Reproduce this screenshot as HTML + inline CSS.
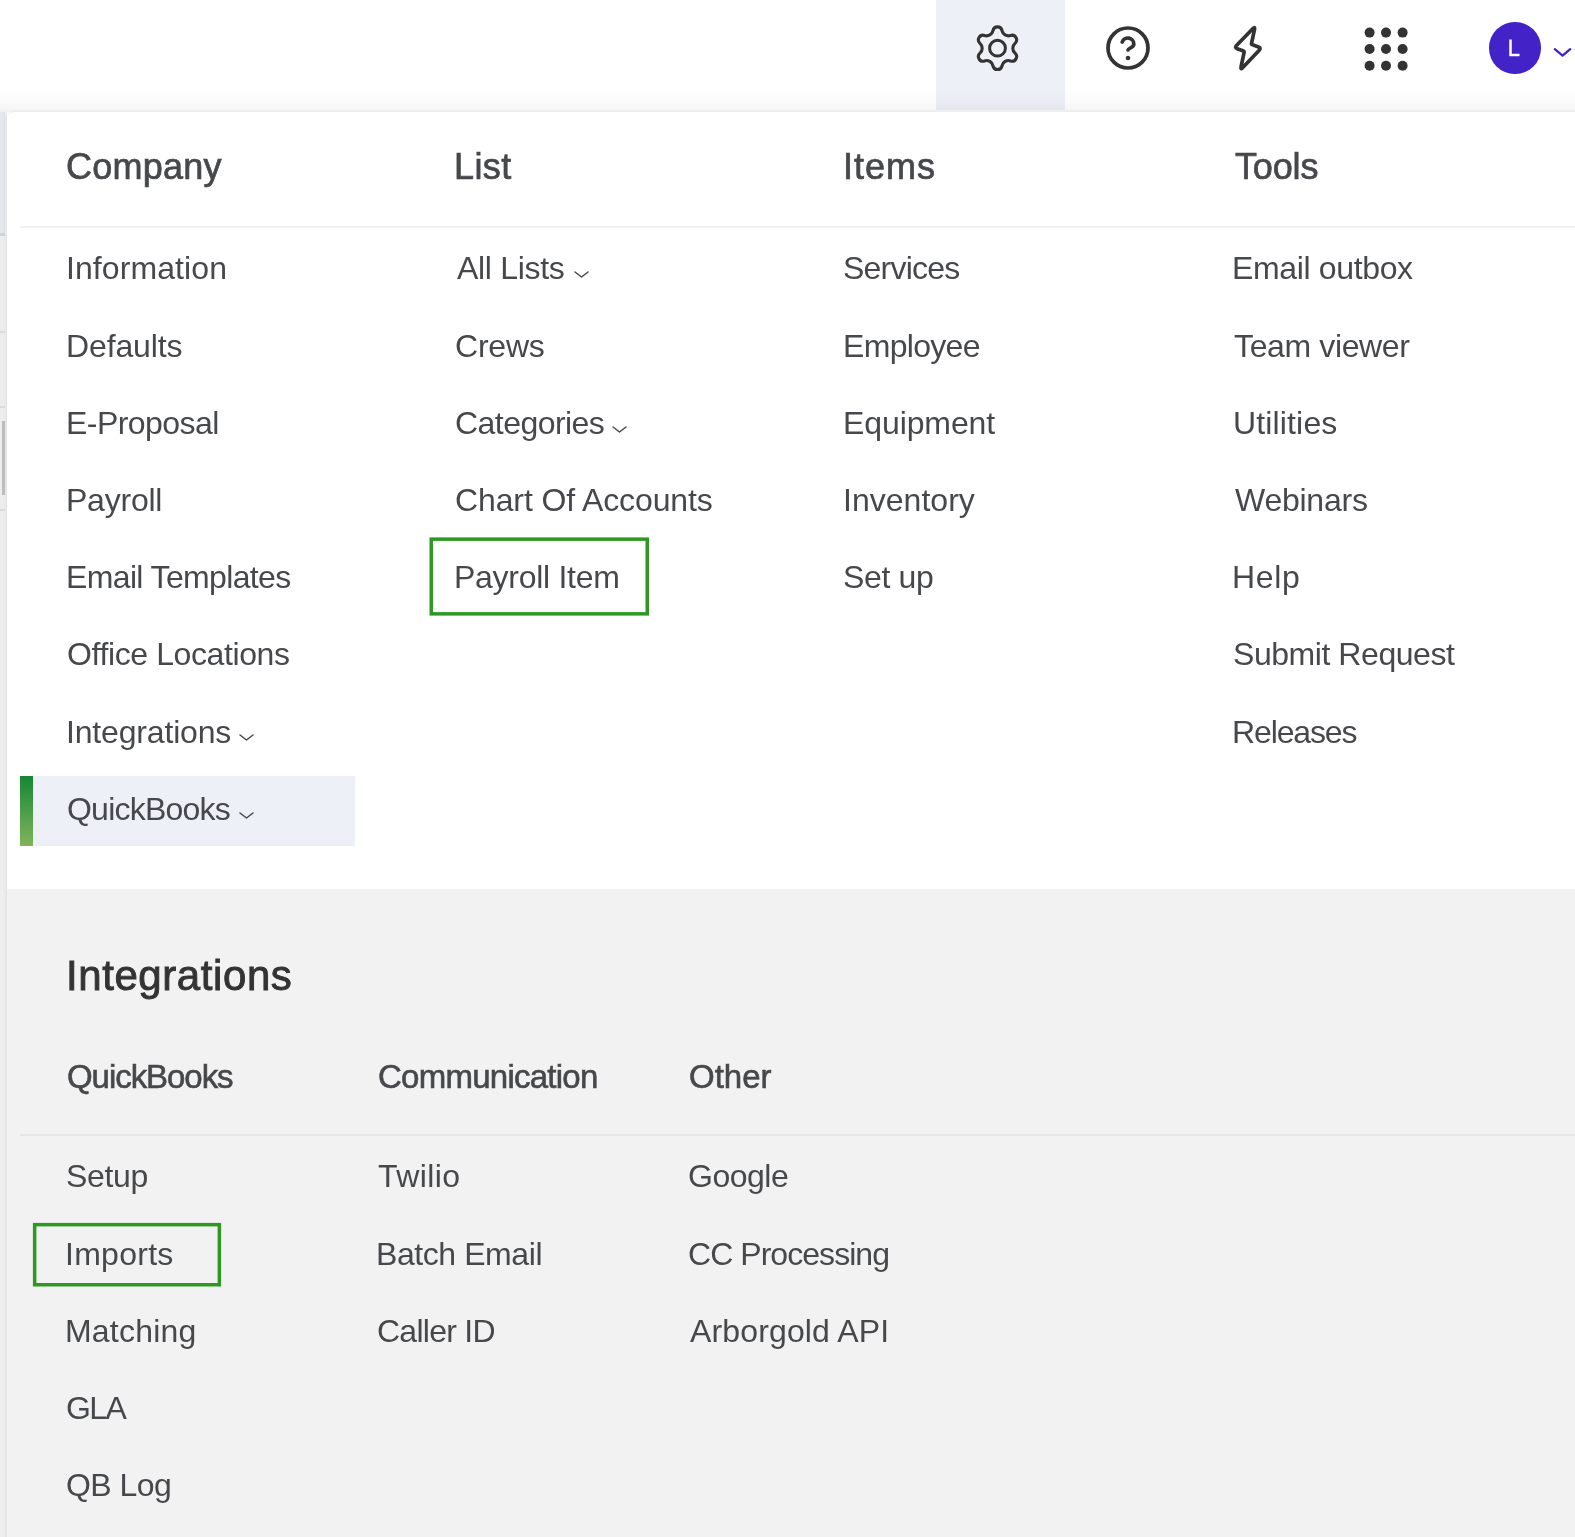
<!DOCTYPE html>
<html><head><meta charset="utf-8"><style>
html,body{margin:0;padding:0;}
body{width:1575px;height:1537px;overflow:hidden;position:relative;background:#ffffff;font-family:"Liberation Sans",sans-serif;}
.ab{position:absolute;}
.t{position:absolute;white-space:nowrap;will-change:transform;}
</style></head><body>
<!-- header -->
<div class="ab" style="left:936px;top:0;width:129px;height:110px;background:#edf0f7"></div>
<div class="ab" style="left:0;top:86px;width:1575px;height:27px;background:linear-gradient(rgba(0,0,0,0) 0px,rgba(0,0,0,0.012) 12px,rgba(0,0,0,0.03) 21px,rgba(0,0,0,0.045) 24px,rgba(0,0,0,0.065) 25px,rgba(0,0,0,0.02) 26.5px,rgba(0,0,0,0) 27px)"></div>
<!-- left strip -->
<div class="ab" style="left:0;top:112px;width:7px;height:1425px;background:#ededed"></div>
<div class="ab" style="left:0;top:112px;width:5px;height:122px;background:linear-gradient(90deg,#e6eaee,#dfe4e8)"></div>
<div class="ab" style="left:0;top:233px;width:5px;height:3px;background:#cfd3d6"></div>
<div class="ab" style="left:0;top:331px;width:5px;height:2px;background:#d7dde2"></div>
<div class="ab" style="left:0;top:406px;width:5px;height:2px;background:#d7dde2"></div>
<div class="ab" style="left:0;top:509px;width:5px;height:2px;background:#d7dde2"></div>
<div class="ab" style="left:2px;top:421px;width:3px;height:74px;background:#bdbdbd"></div>
<!-- dropdown -->
<div class="ab" style="left:7px;top:112px;width:1580px;height:1430px;background:#f2f2f2;border-top-left-radius:8px;box-shadow:-1px 0 3px rgba(0,0,0,0.06);overflow:hidden">
  <div class="ab" style="left:0;top:0;width:1580px;height:777px;background:#ffffff"></div>
</div>
<div class="ab" style="left:20px;top:226px;width:1555px;height:2px;background:#f1f1f1"></div>
<div class="ab" style="left:20px;top:776px;width:335px;height:70px;background:#edf0f7"></div>
<div class="ab" style="left:20px;top:776px;width:13px;height:70px;background:linear-gradient(#168636,#80b45a)"></div>
<svg class="ab" style="left:0;top:0" width="700" height="1300" viewBox="0 0 700 1300"><g fill="none" stroke="#2e9822" stroke-width="3.5"><rect x="431.25" y="539.15" width="216" height="74.7"/><rect x="34.65" y="1224.65" width="184.7" height="60.1"/></g></svg>
<div class="ab" style="left:20px;top:1134px;width:1560px;height:2px;background:#e6e6e6"></div>

<svg class="ab" style="left:573.2px;top:270.1px" width="17" height="9" viewBox="0 0 17 9"><path d="M2 2 L8.5 7 L15 2" fill="none" stroke="#46484b" stroke-width="1.5" stroke-linecap="round" stroke-linejoin="round"/></svg><svg class="ab" style="left:611.4px;top:424.5px" width="17" height="9" viewBox="0 0 17 9"><path d="M2 2 L8.5 7 L15 2" fill="none" stroke="#46484b" stroke-width="1.5" stroke-linecap="round" stroke-linejoin="round"/></svg><svg class="ab" style="left:238px;top:733.3px" width="17" height="9" viewBox="0 0 17 9"><path d="M2 2 L8.5 7 L15 2" fill="none" stroke="#46484b" stroke-width="1.5" stroke-linecap="round" stroke-linejoin="round"/></svg><svg class="ab" style="left:238px;top:810.5px" width="17" height="9" viewBox="0 0 17 9"><path d="M2 2 L8.5 7 L15 2" fill="none" stroke="#46484b" stroke-width="1.5" stroke-linecap="round" stroke-linejoin="round"/></svg>
<div class="t" style="left:66.34px;top:148.90px;font-size:36px;line-height:36px;letter-spacing:0.253px;color:#46484b;-webkit-text-stroke:0.7px #46484b">Company</div>
<div class="t" style="left:453.80px;top:148.90px;font-size:36px;line-height:36px;letter-spacing:0.400px;color:#46484b;-webkit-text-stroke:0.7px #46484b">List</div>
<div class="t" style="left:842.80px;top:148.90px;font-size:36px;line-height:36px;letter-spacing:1.025px;color:#46484b;-webkit-text-stroke:0.7px #46484b">Items</div>
<div class="t" style="left:1234.50px;top:148.90px;font-size:36px;line-height:36px;letter-spacing:-0.150px;color:#46484b;-webkit-text-stroke:0.7px #46484b">Tools</div>
<div class="t" style="left:65.80px;top:252.40px;font-size:32px;line-height:32px;letter-spacing:0.090px;color:#46484b">Information</div>
<div class="t" style="left:65.80px;top:329.60px;font-size:32px;line-height:32px;letter-spacing:-0.129px;color:#46484b">Defaults</div>
<div class="t" style="left:65.80px;top:406.80px;font-size:32px;line-height:32px;letter-spacing:-0.556px;color:#46484b">E-Proposal</div>
<div class="t" style="left:65.80px;top:484.00px;font-size:32px;line-height:32px;letter-spacing:-0.223px;color:#46484b">Payroll</div>
<div class="t" style="left:65.80px;top:561.20px;font-size:32px;line-height:32px;letter-spacing:-0.636px;color:#46484b">Email Templates</div>
<div class="t" style="left:66.70px;top:638.40px;font-size:32px;line-height:32px;letter-spacing:-0.393px;color:#46484b">Office Locations</div>
<div class="t" style="left:65.80px;top:715.60px;font-size:32px;line-height:32px;letter-spacing:-0.173px;color:#46484b">Integrations</div>
<div class="t" style="left:66.70px;top:792.80px;font-size:32px;line-height:32px;letter-spacing:-0.767px;color:#46484b">QuickBooks</div>
<div class="t" style="left:456.50px;top:252.40px;font-size:32px;line-height:32px;letter-spacing:-0.310px;color:#46484b">All Lists</div>
<div class="t" style="left:454.70px;top:329.60px;font-size:32px;line-height:32px;letter-spacing:-0.225px;color:#46484b">Crews</div>
<div class="t" style="left:454.70px;top:406.80px;font-size:32px;line-height:32px;letter-spacing:-0.544px;color:#46484b">Categories</div>
<div class="t" style="left:454.70px;top:484.00px;font-size:32px;line-height:32px;letter-spacing:-0.119px;color:#46484b">Chart Of Accounts</div>
<div class="t" style="left:453.80px;top:561.20px;font-size:32px;line-height:32px;letter-spacing:-0.282px;color:#46484b">Payroll Item</div>
<div class="t" style="left:843.44px;top:252.40px;font-size:32px;line-height:32px;letter-spacing:-0.791px;color:#46484b">Services</div>
<div class="t" style="left:842.54px;top:329.60px;font-size:32px;line-height:32px;letter-spacing:-0.680px;color:#46484b">Employee</div>
<div class="t" style="left:842.54px;top:406.80px;font-size:32px;line-height:32px;letter-spacing:-0.098px;color:#46484b">Equipment</div>
<div class="t" style="left:842.54px;top:484.00px;font-size:32px;line-height:32px;letter-spacing:0.027px;color:#46484b">Inventory</div>
<div class="t" style="left:843.44px;top:561.20px;font-size:32px;line-height:32px;letter-spacing:-0.328px;color:#46484b">Set up</div>
<div class="t" style="left:1231.80px;top:252.40px;font-size:32px;line-height:32px;letter-spacing:-0.355px;color:#46484b">Email outbox</div>
<div class="t" style="left:1233.60px;top:329.60px;font-size:32px;line-height:32px;letter-spacing:-0.370px;color:#46484b">Team viewer</div>
<div class="t" style="left:1232.70px;top:406.80px;font-size:32px;line-height:32px;letter-spacing:0.150px;color:#46484b">Utilities</div>
<div class="t" style="left:1234.50px;top:484.00px;font-size:32px;line-height:32px;letter-spacing:-0.243px;color:#46484b">Webinars</div>
<div class="t" style="left:1231.80px;top:561.20px;font-size:32px;line-height:32px;letter-spacing:0.667px;color:#46484b">Help</div>
<div class="t" style="left:1232.70px;top:638.40px;font-size:32px;line-height:32px;letter-spacing:-0.446px;color:#46484b">Submit Request</div>
<div class="t" style="left:1231.80px;top:715.60px;font-size:32px;line-height:32px;letter-spacing:-1.129px;color:#46484b">Releases</div>
<div class="t" style="left:66.42px;top:954.50px;font-size:42px;line-height:42px;letter-spacing:0.578px;color:#333333;-webkit-text-stroke:0.9px #333333">Integrations</div>
<div class="t" style="left:66.98px;top:1059.50px;font-size:33px;line-height:33px;letter-spacing:-1.051px;color:#46484b;-webkit-text-stroke:0.6px #46484b">QuickBooks</div>
<div class="t" style="left:377.72px;top:1059.50px;font-size:33px;line-height:33px;letter-spacing:-0.745px;color:#46484b;-webkit-text-stroke:0.6px #46484b">Communication</div>
<div class="t" style="left:689.10px;top:1059.50px;font-size:33px;line-height:33px;letter-spacing:-0.020px;color:#46484b;-webkit-text-stroke:0.6px #46484b">Other</div>
<div class="t" style="left:66.20px;top:1160.30px;font-size:32px;line-height:32px;letter-spacing:-0.350px;color:#46484b">Setup</div>
<div class="t" style="left:65.30px;top:1237.50px;font-size:32px;line-height:32px;letter-spacing:0.270px;color:#46484b">Imports</div>
<div class="t" style="left:65.30px;top:1314.70px;font-size:32px;line-height:32px;letter-spacing:0.200px;color:#46484b">Matching</div>
<div class="t" style="left:66.20px;top:1391.90px;font-size:32px;line-height:32px;letter-spacing:-1.650px;color:#46484b">GLA</div>
<div class="t" style="left:66.20px;top:1469.10px;font-size:32px;line-height:32px;letter-spacing:-0.548px;color:#46484b">QB Log</div>
<div class="t" style="left:377.72px;top:1160.30px;font-size:32px;line-height:32px;letter-spacing:0.416px;color:#46484b">Twilio</div>
<div class="t" style="left:375.92px;top:1237.50px;font-size:32px;line-height:32px;letter-spacing:-0.422px;color:#46484b">Batch Email</div>
<div class="t" style="left:376.82px;top:1314.70px;font-size:32px;line-height:32px;letter-spacing:-0.740px;color:#46484b">Caller ID</div>
<div class="t" style="left:688.20px;top:1160.30px;font-size:32px;line-height:32px;letter-spacing:-0.480px;color:#46484b">Google</div>
<div class="t" style="left:688.20px;top:1237.50px;font-size:32px;line-height:32px;letter-spacing:-0.950px;color:#46484b">CC Processing</div>
<div class="t" style="left:690.00px;top:1314.70px;font-size:32px;line-height:32px;letter-spacing:0.142px;color:#46484b">Arborgold API</div>
<!-- icons -->
<svg class="ab" style="left:970px;top:22px" width="55" height="54" viewBox="0 0 55 54"><path d="M22.99 8.58A4.60 4.60 0 0 1 32.01 8.58A6.55 6.55 0 0 0 40.50 13.49A4.60 4.60 0 0 1 45.01 21.30A6.55 6.55 0 0 0 45.01 31.10A4.60 4.60 0 0 1 40.50 38.91A6.55 6.55 0 0 0 32.01 43.82A4.60 4.60 0 0 1 22.99 43.82A6.55 6.55 0 0 0 14.50 38.91A4.60 4.60 0 0 1 9.99 31.10A6.55 6.55 0 0 0 9.99 21.30A4.60 4.60 0 0 1 14.50 13.49A6.55 6.55 0 0 0 22.99 8.58Z" fill="none" stroke="#333" stroke-width="3.1" stroke-linejoin="round"/><circle cx="27.5" cy="26.2" r="7.9" fill="none" stroke="#333" stroke-width="3"/></svg>
<svg class="ab" style="left:1099.8px;top:20.4px" width="56" height="56" viewBox="0 0 56 56"><g fill="none" stroke="#333" stroke-width="3.7" stroke-linecap="round" stroke-linejoin="round"><circle cx="28" cy="28" r="20"/><path d="M22.18 22.00A6 6 0 0 1 33.84 24.00C33.84 28.00 28.00 28.00 28.00 30.00"/></g><circle cx="28" cy="38" r="2.3" fill="#333"/></svg>
<svg class="ab" style="left:1225px;top:18px" width="45" height="60" viewBox="0 0 45 60"><path d="M29.53 11.33Q30.20 8.20 27.97 10.49L11.49 27.45Q9.40 29.60 12.21 30.65L18.55 33.02Q19.30 33.30 19.14 34.08L16.05 48.87Q15.40 52.00 17.60 49.68L34.23 32.17Q36.30 30.00 33.49 28.96L27.05 26.58Q26.30 26.30 26.47 25.52Z" fill="none" stroke="#333" stroke-width="3.7" stroke-linejoin="round"/></svg>
<svg class="ab" style="left:1350px;top:10px" width="70" height="70" viewBox="0 0 70 70"><g fill="#333"><circle cx="19.6" cy="22.6" r="5"/><circle cx="36" cy="22.6" r="5"/><circle cx="52.6" cy="22.6" r="5"/><circle cx="19.6" cy="39" r="5"/><circle cx="36" cy="39" r="5"/><circle cx="52.6" cy="39" r="5"/><circle cx="19.6" cy="55.7" r="5"/><circle cx="36" cy="55.7" r="5"/><circle cx="52.6" cy="55.7" r="5"/></g></svg>
<div class="ab" style="left:1489.3px;top:22.2px;width:51.4px;height:51.4px;border-radius:50%;background:#4322c8"></div>
<svg class="ab" style="left:1500px;top:30px" width="30" height="30" viewBox="0 0 30 30"><path d="M10.5 9.5 V25 H19.5" fill="none" stroke="#fff" stroke-width="2.5"/></svg>
<svg class="ab" style="left:1550px;top:44px" width="25" height="16" viewBox="0 0 25 16"><path d="M4.8 5.2 L12.6 11.6 L20.2 5.2" fill="none" stroke="#4322c8" stroke-width="2.3" stroke-linecap="round" stroke-linejoin="round"/></svg>
</body></html>
